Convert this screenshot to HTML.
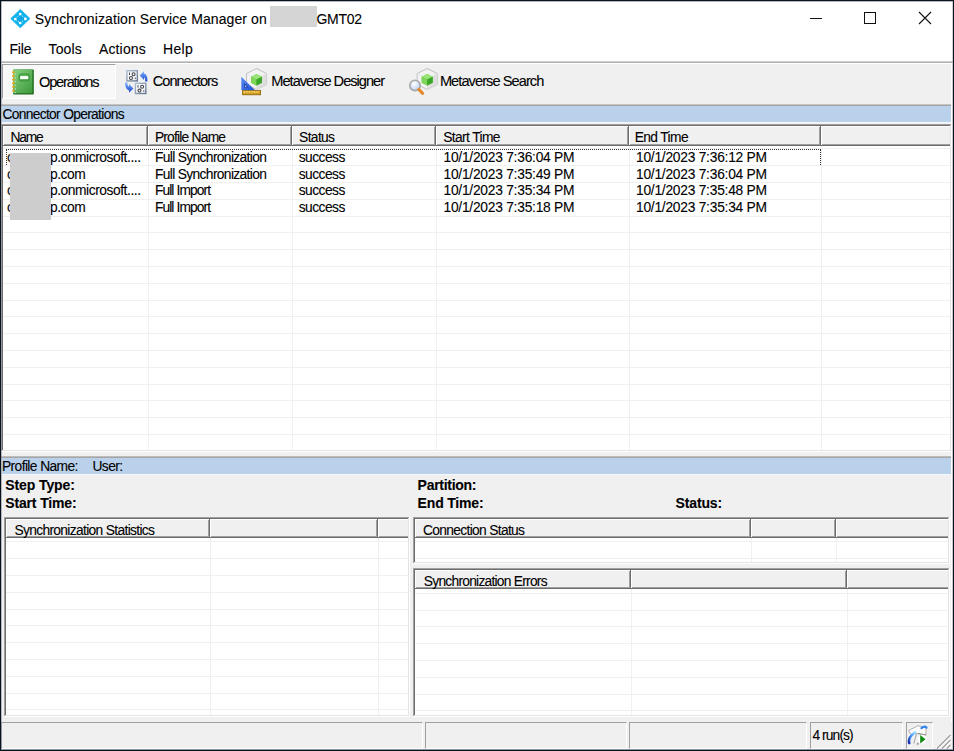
<!DOCTYPE html>
<html><head><meta charset="utf-8"><style>
html,body{margin:0;padding:0;width:954px;height:751px;overflow:hidden;background:#f0f0f0}
body{position:relative;font-family:"Liberation Sans",sans-serif}
.a{position:absolute;box-sizing:content-box}
.t{position:absolute;white-space:nowrap;font-family:"Liberation Sans",sans-serif;-webkit-text-stroke:0.1px currentColor}
svg.a{overflow:visible}
</style></head><body>
<div class="a" style="left:0px;top:0px;width:954px;height:751px;background:#f0f0f0;"></div>
<div class="a" style="left:1px;top:1px;width:952px;height:61px;background:#ffffff;"></div>
<div class="a" style="left:1px;top:61px;width:952px;height:1px;background:#cfcfcf;"></div>
<div class="a" style="left:1px;top:62px;width:952px;height:1px;background:#b2b2b2;"></div>
<div class="a" style="left:1px;top:63px;width:952px;height:1px;background:#ffffff;"></div>
<svg class="a" style="left:9px;top:8px" width="23" height="21" viewBox="0 0 23 21">
<path d="M11.3 1.4 L21 10.6 L11.3 19.8 L1.8 10.6 Z" fill="#10b2ec" stroke="#10b2ec" stroke-width="0.8" stroke-linejoin="round"/>
<path d="M11.2 6.1 L16.4 10.9 L11.2 15 L6.2 11.1 Z" fill="#0aa6e6" stroke="#c4ecfb" stroke-width="1" stroke-dasharray="1.5 1"/>
<circle cx="11.2" cy="6.1" r="1.35" fill="#fff"/><circle cx="6.2" cy="11.1" r="1.35" fill="#fff"/>
<circle cx="16.4" cy="10.9" r="1.35" fill="#fff"/><circle cx="11.2" cy="15" r="1.35" fill="#fff"/>
</svg>
<div class="t" id="t0" style="left:34.80px;top:12.15px;font-size:14px;line-height:14px;font-weight:normal;color:#000;letter-spacing:0.097px;">Synchronization Service Manager on</div>
<div class="a" style="left:270px;top:6px;width:47px;height:21px;background:#d5d5d5;"></div>
<div class="t" id="t1" style="left:316.40px;top:11.95px;font-size:14px;line-height:14px;font-weight:normal;color:#000;letter-spacing:-0.250px;">GMT02</div>
<div class="a" style="left:810px;top:18px;width:12px;height:1px;background:#111;"></div>
<div class="a" style="left:864px;top:12px;width:10px;height:10px;border:1.2px solid #111"></div>
<svg class="a" style="left:918px;top:11px" width="14" height="14" viewBox="0 0 14 14">
<path d="M1 1 L13 13 M13 1 L1 13" stroke="#111" stroke-width="1.1"/></svg>
<div class="t" id="t2" style="left:9.40px;top:42.25px;font-size:14px;line-height:14px;font-weight:normal;color:#000;letter-spacing:-0.132px;">File</div>
<div class="t" id="t3" style="left:48.60px;top:42.25px;font-size:14px;line-height:14px;font-weight:normal;color:#000;letter-spacing:0.100px;">Tools</div>
<div class="t" id="t4" style="left:98.90px;top:42.25px;font-size:14px;line-height:14px;font-weight:normal;color:#000;letter-spacing:0.166px;">Actions</div>
<div class="t" id="t5" style="left:162.90px;top:42.25px;font-size:14px;line-height:14px;font-weight:normal;color:#000;letter-spacing:0.401px;">Help</div>
<div class="a" style="left:2px;top:64px;width:112px;height:33px;border-top:1px solid #a0a0a0;border-left:1px solid #a0a0a0;border-right:1px solid #fff;border-bottom:1px solid #fff;background-color:#f6f6f6;background-image:linear-gradient(45deg,#fafafa 25%,transparent 25%,transparent 75%,#fafafa 75%),linear-gradient(45deg,#fafafa 25%,transparent 25%,transparent 75%,#fafafa 75%);background-size:2px 2px;background-position:0 0,1px 1px"></div>
<svg class="a" style="left:11px;top:68px" width="25" height="28" viewBox="0 0 25 28">
<defs><linearGradient id="gnb" x1="0" y1="0" x2="1" y2="1"><stop offset="0" stop-color="#86d27f"/><stop offset="1" stop-color="#3b983a"/></linearGradient></defs>
<rect x="2.2" y="1.6" width="20.6" height="25" rx="0.8" fill="#1c6a1c"/>
<rect x="2.2" y="1.6" width="19.2" height="23.6" rx="0.8" fill="url(#gnb)"/>
<rect x="8.2" y="6.2" width="10" height="6.6" rx="2.2" fill="none" stroke="#3c963c" stroke-width="1.3"/>
<rect x="9.2" y="8.2" width="8" height="2.8" fill="#ffffff"/>
<g fill="#e3a91c"><circle cx="2.4" cy="4.2" r="1.25"/><circle cx="2.4" cy="7.9" r="1.25"/><circle cx="2.4" cy="11.6" r="1.25"/><circle cx="2.4" cy="15.3" r="1.25"/><circle cx="2.4" cy="19" r="1.25"/><circle cx="2.4" cy="22.7" r="1.25"/></g>
<g fill="#d8f0d8"><rect x="3.6" y="5.6" width="1.2" height="1"/><rect x="3.6" y="9.3" width="1.2" height="1"/><rect x="3.6" y="13" width="1.2" height="1"/><rect x="3.6" y="16.7" width="1.2" height="1"/><rect x="3.6" y="20.4" width="1.2" height="1"/><rect x="3.6" y="24.1" width="1.2" height="1"/></g>
</svg>
<div class="t" id="t6" style="left:39.00px;top:75.44px;font-size:14.6px;line-height:14.6px;font-weight:normal;color:#000;letter-spacing:-1.201px;">Operations</div>
<svg class="a" style="left:122px;top:68px" width="28" height="28" viewBox="0 0 28 28">
<defs><linearGradient id="gbx" x1="0" y1="0" x2="1" y2="1"><stop offset="0" stop-color="#b9c6d8"/><stop offset="1" stop-color="#5d6f88"/></linearGradient>
<linearGradient id="gar" x1="0" y1="0" x2="0" y2="1"><stop offset="0" stop-color="#7fb0ff"/><stop offset="1" stop-color="#1846c8"/></linearGradient></defs>
<rect x="4.2" y="2" width="11.8" height="11.6" fill="url(#gbx)"/>
<rect x="5.6" y="3.4" width="9" height="8.8" fill="#f2f5fb"/>
<rect x="12.7" y="14.6" width="11.8" height="11.6" fill="url(#gbx)"/>
<rect x="14.1" y="16" width="9" height="8.8" fill="#f2f5fb"/>
<g fill="none" stroke="#4a4a4a" stroke-width="1.1"><circle cx="11.6" cy="6.2" r="1.5"/><circle cx="9" cy="10" r="1.5"/><circle cx="20.1" cy="18.8" r="1.5"/><circle cx="17.5" cy="22.6" r="1.5"/></g>
<g fill="#555"><rect x="7" y="4.5" width="1" height="2.5"/><rect x="12.8" y="9.5" width="1" height="1.6"/><rect x="15.5" y="17.1" width="1" height="2.5"/><rect x="21.3" y="22.1" width="1" height="1.6"/></g>
<path d="M17.8 7.6 L22 3.2 L22 5.6 Q25.8 6.4 25.4 13.6 L23.2 13.6 Q23.4 9.6 22 9.4 L22 12 Z" fill="url(#gar)"/>
<path d="M11.4 20.4 L7 24.8 L7 22.4 Q3 21.6 3.2 14.6 L5.4 14.6 Q5.2 18.4 7 18.6 L7 16 Z" fill="url(#gar)"/>
</svg>
<div class="t" id="t7" style="left:152.80px;top:74.44px;font-size:14.6px;line-height:14.6px;font-weight:normal;color:#000;letter-spacing:-1.021px;">Connectors</div>
<svg class="a" style="left:240px;top:67px" width="30" height="30" viewBox="0 0 30 30">
<defs><linearGradient id="gtr" x1="0" y1="0" x2="1" y2="1"><stop offset="0" stop-color="#5b8df5"/><stop offset="1" stop-color="#1d4fd2"/></linearGradient>
<linearGradient id="grl" x1="0" y1="0" x2="0" y2="1"><stop offset="0" stop-color="#f0c040"/><stop offset="1" stop-color="#c88e10"/></linearGradient></defs>
<path d="M16.5 1.5 L26.5 6.5 L26.5 17.5 L16.5 22.5 L6.5 17.5 L6.5 6.5 Z" fill="#f3f3f3" stroke="#c4c4c4" stroke-width="1.1"/>
<path d="M16.5 22.5 L16.5 12 L26.5 6.5 L26.5 17.5 Z" fill="#dedede"/>
<path d="M6.5 6.5 L16.5 12 L26.5 6.5 M16.5 12 L16.5 22.5" fill="none" stroke="#e6e6e6" stroke-width="0.8"/>
<path d="M16.5 7 L22.0 9.8 L22.0 15.8 L16.5 18.6 L11.0 15.8 L11.0 9.8 Z" fill="#5cc13a"/>
<path d="M11.0 9.8 L16.5 12.6 L22.0 9.8 L16.5 7 Z" fill="#9be47a"/>
<path d="M11.0 9.8 L16.5 12.6 L16.5 18.6 L11.0 15.8 Z" fill="#7fd55a"/>
<path d="M16.5 12.6 L16.5 18.6 L22.0 15.8 L22.0 9.8 Z" fill="#3aa528"/>
<path d="M1.3 9.8 L1.3 23 L14.8 23 Z" fill="url(#gtr)"/>
<path d="M4.2 16.2 L4.2 20.6 L8.6 20.6 Z" fill="#163a9e"/>
<circle cx="5.6" cy="19.2" r="0.8" fill="#c8d8ff"/>
<rect x="2.6" y="23.4" width="18" height="4.4" fill="url(#grl)" stroke="#8a6210" stroke-width="0.8"/>
<path d="M4 25 h1 M6.5 25 h1 M9 25 h1 M11.5 25 h1 M14 25 h1 M16.5 25 h1" stroke="#fff3c0" stroke-width="1"/>
</svg>
<div class="t" id="t8" style="left:271.30px;top:74.44px;font-size:14.6px;line-height:14.6px;font-weight:normal;color:#000;letter-spacing:-0.990px;">Metaverse Designer</div>
<svg class="a" style="left:406px;top:67px" width="32" height="30" viewBox="0 0 32 30">
<defs><radialGradient id="glens" cx="0.4" cy="0.35" r="0.7"><stop offset="0" stop-color="#ffffff"/><stop offset="1" stop-color="#b8cdf0"/></radialGradient></defs>
<path d="M21.2 1.5 L31.2 6.5 L31.2 17.5 L21.2 22.5 L11.2 17.5 L11.2 6.5 Z" fill="#f3f3f3" stroke="#c4c4c4" stroke-width="1.1"/>
<path d="M21.2 22.5 L21.2 12 L31.2 6.5 L31.2 17.5 Z" fill="#dedede"/>
<path d="M11.2 6.5 L21.2 12 L31.2 6.5 M21.2 12 L21.2 22.5" fill="none" stroke="#e6e6e6" stroke-width="0.8"/>
<path d="M21.2 7 L26.7 9.8 L26.7 15.8 L21.2 18.6 L15.7 15.8 L15.7 9.8 Z" fill="#5cc13a"/>
<path d="M15.7 9.8 L21.2 12.6 L26.7 9.8 L21.2 7 Z" fill="#9be47a"/>
<path d="M15.7 9.8 L21.2 12.6 L21.2 18.6 L15.7 15.8 Z" fill="#7fd55a"/>
<path d="M21.2 12.6 L21.2 18.6 L26.7 15.8 L26.7 9.8 Z" fill="#3aa528"/>
<circle cx="9" cy="18.4" r="5.2" fill="url(#glens)" stroke="#a6a6a6" stroke-width="1.6"/>
<path d="M12.8 22.4 L16.6 26.4" stroke="#e5892a" stroke-width="3" stroke-linecap="round"/>
</svg>
<div class="t" id="t9" style="left:439.90px;top:74.44px;font-size:14.6px;line-height:14.6px;font-weight:normal;color:#000;letter-spacing:-0.933px;">Metaverse Search</div>
<div class="a" style="left:1px;top:104px;width:951px;height:1px;background:#c4c4c4;"></div>
<div class="a" style="left:1px;top:105px;width:951px;height:1px;background:#a4a4a4;"></div>
<div class="a" style="left:2px;top:106px;width:949px;height:16px;background:#b9d1ea;"></div>
<div class="a" style="left:2px;top:122px;width:949px;height:1px;background:#f4f8fc;"></div>
<div class="t" id="t10" style="left:2.40px;top:107.52px;font-size:13.8px;line-height:13.8px;font-weight:normal;color:#000;letter-spacing:-0.674px;">Connector Operations</div>
<div class="a" style="left:1px;top:124px;width:951px;height:328px;background:#ffffff;"></div>
<div class="a" style="left:1px;top:124px;width:951px;height:1px;background:#a0a0a0;"></div>
<div class="a" style="left:1px;top:124px;width:1px;height:328px;background:#a0a0a0;"></div>
<div class="a" style="left:2px;top:125px;width:949px;height:1px;background:#6d6d6d;"></div>
<div class="a" style="left:2px;top:125px;width:1px;height:326px;background:#6d6d6d;"></div>
<div class="a" style="left:1px;top:451px;width:951px;height:1px;background:#ffffff;"></div>
<div class="a" style="left:951px;top:124px;width:1px;height:328px;background:#ffffff;"></div>
<div class="a" style="left:2px;top:450px;width:949px;height:1px;background:#e3e3e3;"></div>
<div class="a" style="left:950px;top:125px;width:1px;height:326px;background:#e3e3e3;"></div>
<div class="a" style="left:3px;top:126px;width:947px;height:20px;background:#f0f0f0;"></div>
<div class="a" style="left:3px;top:126px;width:947px;height:1px;background:#ffffff;"></div>
<div class="a" style="left:3px;top:145px;width:947px;height:1px;background:#6d6d6d;"></div>
<div class="a" style="left:3px;top:144px;width:947px;height:1px;background:#a0a0a0;"></div>
<div class="a" style="left:3px;top:126px;width:1px;height:19px;background:#ffffff;"></div>
<div class="a" style="left:146px;top:127px;width:1px;height:18px;background:#a0a0a0;"></div>
<div class="a" style="left:147px;top:126px;width:1px;height:20px;background:#6d6d6d;"></div>
<div class="a" style="left:148px;top:126px;width:1px;height:19px;background:#ffffff;"></div>
<div class="a" style="left:290px;top:127px;width:1px;height:18px;background:#a0a0a0;"></div>
<div class="a" style="left:291px;top:126px;width:1px;height:20px;background:#6d6d6d;"></div>
<div class="a" style="left:292px;top:126px;width:1px;height:19px;background:#ffffff;"></div>
<div class="a" style="left:434px;top:127px;width:1px;height:18px;background:#a0a0a0;"></div>
<div class="a" style="left:435px;top:126px;width:1px;height:20px;background:#6d6d6d;"></div>
<div class="a" style="left:436px;top:126px;width:1px;height:19px;background:#ffffff;"></div>
<div class="a" style="left:627px;top:127px;width:1px;height:18px;background:#a0a0a0;"></div>
<div class="a" style="left:628px;top:126px;width:1px;height:20px;background:#6d6d6d;"></div>
<div class="a" style="left:629px;top:126px;width:1px;height:19px;background:#ffffff;"></div>
<div class="a" style="left:819px;top:127px;width:1px;height:18px;background:#a0a0a0;"></div>
<div class="a" style="left:820px;top:126px;width:1px;height:20px;background:#6d6d6d;"></div>
<div class="a" style="left:821px;top:126px;width:1px;height:19px;background:#ffffff;"></div>
<div class="a" style="left:3px;top:148px;width:947px;height:1px;background:#f0f0f0;"></div>
<div class="a" style="left:3px;top:165px;width:947px;height:1px;background:#f0f0f0;"></div>
<div class="a" style="left:3px;top:182px;width:947px;height:1px;background:#f0f0f0;"></div>
<div class="a" style="left:3px;top:199px;width:947px;height:1px;background:#f0f0f0;"></div>
<div class="a" style="left:3px;top:216px;width:947px;height:1px;background:#f0f0f0;"></div>
<div class="a" style="left:3px;top:232px;width:947px;height:1px;background:#f0f0f0;"></div>
<div class="a" style="left:3px;top:249px;width:947px;height:1px;background:#f0f0f0;"></div>
<div class="a" style="left:3px;top:266px;width:947px;height:1px;background:#f0f0f0;"></div>
<div class="a" style="left:3px;top:283px;width:947px;height:1px;background:#f0f0f0;"></div>
<div class="a" style="left:3px;top:300px;width:947px;height:1px;background:#f0f0f0;"></div>
<div class="a" style="left:3px;top:316px;width:947px;height:1px;background:#f0f0f0;"></div>
<div class="a" style="left:3px;top:333px;width:947px;height:1px;background:#f0f0f0;"></div>
<div class="a" style="left:3px;top:350px;width:947px;height:1px;background:#f0f0f0;"></div>
<div class="a" style="left:3px;top:367px;width:947px;height:1px;background:#f0f0f0;"></div>
<div class="a" style="left:3px;top:384px;width:947px;height:1px;background:#f0f0f0;"></div>
<div class="a" style="left:3px;top:400px;width:947px;height:1px;background:#f0f0f0;"></div>
<div class="a" style="left:3px;top:417px;width:947px;height:1px;background:#f0f0f0;"></div>
<div class="a" style="left:3px;top:434px;width:947px;height:1px;background:#f0f0f0;"></div>
<div class="a" style="left:148px;top:146px;width:1px;height:304px;background:#f0f0f0;"></div>
<div class="a" style="left:292px;top:146px;width:1px;height:304px;background:#f0f0f0;"></div>
<div class="a" style="left:436px;top:146px;width:1px;height:304px;background:#f0f0f0;"></div>
<div class="a" style="left:629px;top:146px;width:1px;height:304px;background:#f0f0f0;"></div>
<div class="a" style="left:821px;top:146px;width:1px;height:304px;background:#f0f0f0;"></div>
<div class="t" id="t11" style="left:10.50px;top:130.52px;font-size:13.8px;line-height:13.8px;font-weight:normal;color:#000;letter-spacing:-1.200px;">Name</div>
<div class="t" id="t12" style="left:154.90px;top:130.52px;font-size:13.8px;line-height:13.8px;font-weight:normal;color:#000;letter-spacing:-0.784px;">Profile Name</div>
<div class="t" id="t13" style="left:299.10px;top:130.52px;font-size:13.8px;line-height:13.8px;font-weight:normal;color:#000;letter-spacing:-0.640px;">Status</div>
<div class="t" id="t14" style="left:443.20px;top:130.52px;font-size:13.8px;line-height:13.8px;font-weight:normal;color:#000;letter-spacing:-0.622px;">Start Time</div>
<div class="t" id="t15" style="left:634.70px;top:130.52px;font-size:13.8px;line-height:13.8px;font-weight:normal;color:#000;letter-spacing:-0.630px;">End Time</div>
<div class="t" id="t16" style="left:49.90px;top:150.82px;font-size:13.8px;line-height:13.8px;font-weight:normal;color:#000;letter-spacing:-0.438px;">p.onmicrosoft....</div>
<div class="t" id="t17" style="left:154.90px;top:150.82px;font-size:13.8px;line-height:13.8px;font-weight:normal;color:#000;letter-spacing:-0.642px;">Full Synchronization</div>
<div class="t" id="t18" style="left:298.70px;top:150.82px;font-size:13.8px;line-height:13.8px;font-weight:normal;color:#000;letter-spacing:-0.534px;">success</div>
<div class="t" id="t19" style="left:443.50px;top:150.82px;font-size:13.8px;line-height:13.8px;font-weight:normal;color:#000;letter-spacing:-0.251px;">10/1/2023 7:36:04 PM</div>
<div class="t" id="t20" style="left:636.00px;top:150.82px;font-size:13.8px;line-height:13.8px;font-weight:normal;color:#000;letter-spacing:-0.251px;">10/1/2023 7:36:12 PM</div>
<div class="t" id="t21" style="left:7.00px;top:150.82px;font-size:13.8px;line-height:13.8px;font-weight:normal;color:#111;">o</div>
<div class="t" id="t22" style="left:49.90px;top:167.62px;font-size:13.8px;line-height:13.8px;font-weight:normal;color:#000;letter-spacing:-0.400px;">p.com</div>
<div class="t" id="t23" style="left:154.90px;top:167.62px;font-size:13.8px;line-height:13.8px;font-weight:normal;color:#000;letter-spacing:-0.642px;">Full Synchronization</div>
<div class="t" id="t24" style="left:298.70px;top:167.62px;font-size:13.8px;line-height:13.8px;font-weight:normal;color:#000;letter-spacing:-0.534px;">success</div>
<div class="t" id="t25" style="left:443.50px;top:167.62px;font-size:13.8px;line-height:13.8px;font-weight:normal;color:#000;letter-spacing:-0.251px;">10/1/2023 7:35:49 PM</div>
<div class="t" id="t26" style="left:636.00px;top:167.62px;font-size:13.8px;line-height:13.8px;font-weight:normal;color:#000;letter-spacing:-0.251px;">10/1/2023 7:36:04 PM</div>
<div class="t" id="t27" style="left:7.00px;top:167.62px;font-size:13.8px;line-height:13.8px;font-weight:normal;color:#111;">o</div>
<div class="t" id="t28" style="left:49.90px;top:184.42px;font-size:13.8px;line-height:13.8px;font-weight:normal;color:#000;letter-spacing:-0.438px;">p.onmicrosoft....</div>
<div class="t" id="t29" style="left:154.90px;top:184.42px;font-size:13.8px;line-height:13.8px;font-weight:normal;color:#000;letter-spacing:-0.900px;">Full Import</div>
<div class="t" id="t30" style="left:298.70px;top:184.42px;font-size:13.8px;line-height:13.8px;font-weight:normal;color:#000;letter-spacing:-0.534px;">success</div>
<div class="t" id="t31" style="left:443.50px;top:184.42px;font-size:13.8px;line-height:13.8px;font-weight:normal;color:#000;letter-spacing:-0.251px;">10/1/2023 7:35:34 PM</div>
<div class="t" id="t32" style="left:636.00px;top:184.42px;font-size:13.8px;line-height:13.8px;font-weight:normal;color:#000;letter-spacing:-0.251px;">10/1/2023 7:35:48 PM</div>
<div class="t" id="t33" style="left:7.00px;top:184.42px;font-size:13.8px;line-height:13.8px;font-weight:normal;color:#111;">o</div>
<div class="t" id="t34" style="left:49.90px;top:201.22px;font-size:13.8px;line-height:13.8px;font-weight:normal;color:#000;letter-spacing:-0.400px;">p.com</div>
<div class="t" id="t35" style="left:154.90px;top:201.22px;font-size:13.8px;line-height:13.8px;font-weight:normal;color:#000;letter-spacing:-0.900px;">Full Import</div>
<div class="t" id="t36" style="left:298.70px;top:201.22px;font-size:13.8px;line-height:13.8px;font-weight:normal;color:#000;letter-spacing:-0.534px;">success</div>
<div class="t" id="t37" style="left:443.50px;top:201.22px;font-size:13.8px;line-height:13.8px;font-weight:normal;color:#000;letter-spacing:-0.251px;">10/1/2023 7:35:18 PM</div>
<div class="t" id="t38" style="left:636.00px;top:201.22px;font-size:13.8px;line-height:13.8px;font-weight:normal;color:#000;letter-spacing:-0.251px;">10/1/2023 7:35:34 PM</div>
<div class="t" id="t39" style="left:7.00px;top:201.22px;font-size:13.8px;line-height:13.8px;font-weight:normal;color:#111;">o</div>
<div class="a" style="left:9.5px;top:152.5px;width:41px;height:67px;background:#cdcdcd;"></div>
<div class="a" style="left:6px;top:149px;width:813px;height:15px;border:1px dotted #333;border-bottom:none"></div>
<div class="a" style="left:1px;top:456px;width:951px;height:1px;background:#bcbcbc;"></div>
<div class="a" style="left:1px;top:457px;width:951px;height:1px;background:#a6a6a6;"></div>
<div class="a" style="left:2px;top:458px;width:949px;height:16px;background:#b9d1ea;"></div>
<div class="a" style="left:2px;top:474px;width:949px;height:1px;background:#f4f8fc;"></div>
<div class="t" id="t40" style="left:2.00px;top:460.02px;font-size:13.8px;line-height:13.8px;font-weight:normal;color:#000;letter-spacing:-0.601px;">Profile Name:</div>
<div class="t" id="t41" style="left:92.50px;top:460.02px;font-size:13.8px;line-height:13.8px;font-weight:normal;color:#000;letter-spacing:-0.600px;">User:</div>
<div class="t" id="t42" style="left:5.20px;top:478.15px;font-size:14px;line-height:14px;font-weight:bold;color:#000;letter-spacing:-0.090px;">Step Type:</div>
<div class="t" id="t43" style="left:5.20px;top:495.95px;font-size:14px;line-height:14px;font-weight:bold;color:#000;letter-spacing:-0.140px;">Start Time:</div>
<div class="t" id="t44" style="left:417.60px;top:478.15px;font-size:14px;line-height:14px;font-weight:bold;color:#000;letter-spacing:-0.288px;">Partition:</div>
<div class="t" id="t45" style="left:417.60px;top:495.95px;font-size:14px;line-height:14px;font-weight:bold;color:#000;letter-spacing:-0.172px;">End Time:</div>
<div class="t" id="t46" style="left:675.60px;top:495.95px;font-size:14px;line-height:14px;font-weight:bold;color:#000;letter-spacing:-0.166px;">Status:</div>
<div class="a" style="left:4px;top:517px;width:406px;height:200px;background:#ffffff;"></div>
<div class="a" style="left:4px;top:517px;width:406px;height:1px;background:#a0a0a0;"></div>
<div class="a" style="left:4px;top:517px;width:1px;height:200px;background:#a0a0a0;"></div>
<div class="a" style="left:5px;top:518px;width:404px;height:1px;background:#6d6d6d;"></div>
<div class="a" style="left:5px;top:518px;width:1px;height:198px;background:#6d6d6d;"></div>
<div class="a" style="left:4px;top:716px;width:406px;height:1px;background:#ffffff;"></div>
<div class="a" style="left:409px;top:517px;width:1px;height:200px;background:#ffffff;"></div>
<div class="a" style="left:5px;top:715px;width:404px;height:1px;background:#e3e3e3;"></div>
<div class="a" style="left:408px;top:518px;width:1px;height:198px;background:#e3e3e3;"></div>
<div class="a" style="left:6px;top:519px;width:402px;height:19px;background:#f0f0f0;"></div>
<div class="a" style="left:6px;top:519px;width:402px;height:1px;background:#ffffff;"></div>
<div class="a" style="left:6px;top:537px;width:402px;height:1px;background:#6d6d6d;"></div>
<div class="a" style="left:6px;top:536px;width:402px;height:1px;background:#a0a0a0;"></div>
<div class="a" style="left:6px;top:519px;width:1px;height:18px;background:#ffffff;"></div>
<div class="a" style="left:208px;top:520px;width:1px;height:17px;background:#a0a0a0;"></div>
<div class="a" style="left:209px;top:519px;width:1px;height:19px;background:#6d6d6d;"></div>
<div class="a" style="left:210px;top:519px;width:1px;height:18px;background:#ffffff;"></div>
<div class="a" style="left:376px;top:520px;width:1px;height:17px;background:#a0a0a0;"></div>
<div class="a" style="left:377px;top:519px;width:1px;height:19px;background:#6d6d6d;"></div>
<div class="a" style="left:378px;top:519px;width:1px;height:18px;background:#ffffff;"></div>
<div class="a" style="left:6px;top:541px;width:402px;height:1px;background:#f0f0f0;"></div>
<div class="a" style="left:6px;top:558px;width:402px;height:1px;background:#f0f0f0;"></div>
<div class="a" style="left:6px;top:575px;width:402px;height:1px;background:#f0f0f0;"></div>
<div class="a" style="left:6px;top:592px;width:402px;height:1px;background:#f0f0f0;"></div>
<div class="a" style="left:6px;top:609px;width:402px;height:1px;background:#f0f0f0;"></div>
<div class="a" style="left:6px;top:625px;width:402px;height:1px;background:#f0f0f0;"></div>
<div class="a" style="left:6px;top:642px;width:402px;height:1px;background:#f0f0f0;"></div>
<div class="a" style="left:6px;top:659px;width:402px;height:1px;background:#f0f0f0;"></div>
<div class="a" style="left:6px;top:676px;width:402px;height:1px;background:#f0f0f0;"></div>
<div class="a" style="left:6px;top:693px;width:402px;height:1px;background:#f0f0f0;"></div>
<div class="a" style="left:6px;top:709px;width:402px;height:1px;background:#f0f0f0;"></div>
<div class="a" style="left:210px;top:538px;width:1px;height:177px;background:#f0f0f0;"></div>
<div class="a" style="left:378px;top:538px;width:1px;height:177px;background:#f0f0f0;"></div>
<div class="t" id="t47" style="left:14.40px;top:523.52px;font-size:13.8px;line-height:13.8px;font-weight:normal;color:#000;letter-spacing:-0.664px;">Synchronization Statistics</div>
<div class="a" style="left:413px;top:517px;width:537px;height:47px;background:#ffffff;"></div>
<div class="a" style="left:413px;top:517px;width:537px;height:1px;background:#a0a0a0;"></div>
<div class="a" style="left:413px;top:517px;width:1px;height:47px;background:#a0a0a0;"></div>
<div class="a" style="left:414px;top:518px;width:535px;height:1px;background:#6d6d6d;"></div>
<div class="a" style="left:414px;top:518px;width:1px;height:45px;background:#6d6d6d;"></div>
<div class="a" style="left:413px;top:563px;width:537px;height:1px;background:#ffffff;"></div>
<div class="a" style="left:949px;top:517px;width:1px;height:47px;background:#ffffff;"></div>
<div class="a" style="left:414px;top:562px;width:535px;height:1px;background:#e3e3e3;"></div>
<div class="a" style="left:948px;top:518px;width:1px;height:45px;background:#e3e3e3;"></div>
<div class="a" style="left:415px;top:519px;width:533px;height:19px;background:#f0f0f0;"></div>
<div class="a" style="left:415px;top:519px;width:533px;height:1px;background:#ffffff;"></div>
<div class="a" style="left:415px;top:537px;width:533px;height:1px;background:#6d6d6d;"></div>
<div class="a" style="left:415px;top:536px;width:533px;height:1px;background:#a0a0a0;"></div>
<div class="a" style="left:415px;top:519px;width:1px;height:18px;background:#ffffff;"></div>
<div class="a" style="left:749px;top:520px;width:1px;height:17px;background:#a0a0a0;"></div>
<div class="a" style="left:750px;top:519px;width:1px;height:19px;background:#6d6d6d;"></div>
<div class="a" style="left:751px;top:519px;width:1px;height:18px;background:#ffffff;"></div>
<div class="a" style="left:834px;top:520px;width:1px;height:17px;background:#a0a0a0;"></div>
<div class="a" style="left:835px;top:519px;width:1px;height:19px;background:#6d6d6d;"></div>
<div class="a" style="left:836px;top:519px;width:1px;height:18px;background:#ffffff;"></div>
<div class="a" style="left:415px;top:541px;width:533px;height:1px;background:#f0f0f0;"></div>
<div class="a" style="left:415px;top:558px;width:533px;height:1px;background:#f0f0f0;"></div>
<div class="a" style="left:751px;top:538px;width:1px;height:24px;background:#f0f0f0;"></div>
<div class="a" style="left:836px;top:538px;width:1px;height:24px;background:#f0f0f0;"></div>
<div class="t" id="t48" style="left:423.00px;top:523.72px;font-size:13.8px;line-height:13.8px;font-weight:normal;color:#000;letter-spacing:-0.673px;">Connection Status</div>
<div class="a" style="left:413px;top:568px;width:537px;height:149px;background:#ffffff;"></div>
<div class="a" style="left:413px;top:568px;width:537px;height:1px;background:#a0a0a0;"></div>
<div class="a" style="left:413px;top:568px;width:1px;height:149px;background:#a0a0a0;"></div>
<div class="a" style="left:414px;top:569px;width:535px;height:1px;background:#6d6d6d;"></div>
<div class="a" style="left:414px;top:569px;width:1px;height:147px;background:#6d6d6d;"></div>
<div class="a" style="left:413px;top:716px;width:537px;height:1px;background:#ffffff;"></div>
<div class="a" style="left:949px;top:568px;width:1px;height:149px;background:#ffffff;"></div>
<div class="a" style="left:414px;top:715px;width:535px;height:1px;background:#e3e3e3;"></div>
<div class="a" style="left:948px;top:569px;width:1px;height:147px;background:#e3e3e3;"></div>
<div class="a" style="left:415px;top:570px;width:533px;height:19px;background:#f0f0f0;"></div>
<div class="a" style="left:415px;top:570px;width:533px;height:1px;background:#ffffff;"></div>
<div class="a" style="left:415px;top:588px;width:533px;height:1px;background:#6d6d6d;"></div>
<div class="a" style="left:415px;top:587px;width:533px;height:1px;background:#a0a0a0;"></div>
<div class="a" style="left:415px;top:570px;width:1px;height:18px;background:#ffffff;"></div>
<div class="a" style="left:629px;top:571px;width:1px;height:17px;background:#a0a0a0;"></div>
<div class="a" style="left:630px;top:570px;width:1px;height:19px;background:#6d6d6d;"></div>
<div class="a" style="left:631px;top:570px;width:1px;height:18px;background:#ffffff;"></div>
<div class="a" style="left:845px;top:571px;width:1px;height:17px;background:#a0a0a0;"></div>
<div class="a" style="left:846px;top:570px;width:1px;height:19px;background:#6d6d6d;"></div>
<div class="a" style="left:847px;top:570px;width:1px;height:18px;background:#ffffff;"></div>
<div class="a" style="left:415px;top:593px;width:533px;height:1px;background:#f0f0f0;"></div>
<div class="a" style="left:415px;top:610px;width:533px;height:1px;background:#f0f0f0;"></div>
<div class="a" style="left:415px;top:626px;width:533px;height:1px;background:#f0f0f0;"></div>
<div class="a" style="left:415px;top:643px;width:533px;height:1px;background:#f0f0f0;"></div>
<div class="a" style="left:415px;top:660px;width:533px;height:1px;background:#f0f0f0;"></div>
<div class="a" style="left:415px;top:677px;width:533px;height:1px;background:#f0f0f0;"></div>
<div class="a" style="left:415px;top:694px;width:533px;height:1px;background:#f0f0f0;"></div>
<div class="a" style="left:415px;top:710px;width:533px;height:1px;background:#f0f0f0;"></div>
<div class="a" style="left:631px;top:589px;width:1px;height:126px;background:#f0f0f0;"></div>
<div class="a" style="left:847px;top:589px;width:1px;height:126px;background:#f0f0f0;"></div>
<div class="t" id="t49" style="left:423.80px;top:575.32px;font-size:13.8px;line-height:13.8px;font-weight:normal;color:#000;letter-spacing:-0.750px;">Synchronization Errors</div>
<div class="a" style="left:1px;top:722px;width:420px;height:25px;border-top:1px solid #a0a0a0;border-left:1px solid #a0a0a0;border-right:1px solid #fff;border-bottom:1px solid #fff"></div>
<div class="a" style="left:425px;top:722px;width:200px;height:25px;border-top:1px solid #a0a0a0;border-left:1px solid #a0a0a0;border-right:1px solid #fff;border-bottom:1px solid #fff"></div>
<div class="a" style="left:629px;top:722px;width:176px;height:25px;border-top:1px solid #a0a0a0;border-left:1px solid #a0a0a0;border-right:1px solid #fff;border-bottom:1px solid #fff"></div>
<div class="a" style="left:810px;top:722px;width:91px;height:25px;border-top:1px solid #a0a0a0;border-left:1px solid #a0a0a0;border-right:1px solid #fff;border-bottom:1px solid #fff"></div>
<div class="a" style="left:906px;top:722px;width:25px;height:25px;border-top:1px solid #a0a0a0;border-left:1px solid #a0a0a0;border-right:1px solid #fff;border-bottom:1px solid #fff"></div>
<div class="t" id="t50" style="left:812.40px;top:729.32px;font-size:13.8px;line-height:13.8px;font-weight:normal;color:#000;letter-spacing:-0.888px;">4 run(s)</div>
<svg class="a" style="left:907px;top:725px" width="21" height="21" viewBox="0 0 21 21">
<defs><linearGradient id="gsw" x1="0" y1="1" x2="1" y2="0"><stop offset="0" stop-color="#1a2fb0"/><stop offset="0.5" stop-color="#3d8ef5"/><stop offset="1" stop-color="#9fdcff"/></linearGradient></defs>
<path d="M1.5 5.5 L10.8 0.8 L19 2.2 L19 10 L11 8.5 L4 9.5 Z" fill="#fafafa" stroke="#a8a8a8" stroke-width="0.9" stroke-linejoin="round"/>
<path d="M11 8.5 L19 10" stroke="#8a8a8a" stroke-width="1"/>
<path d="M2.2 18 Q0.8 12.5 8 7.6" fill="none" stroke="url(#gsw)" stroke-width="2.8" stroke-linecap="round"/>
<path d="M3.6 16.5 Q3 12.5 8 9.2" fill="none" stroke="#d8f2ff" stroke-width="0.8"/>
<path d="M9.5 8.8 L6.8 18.5" stroke="#9a9a9a" stroke-width="0.9"/>
<path d="M14.5 3.2 Q17.5 0.6 19.5 2.6" fill="none" stroke="#2f86f0" stroke-width="2.2" stroke-linecap="round"/>
<circle cx="15.2" cy="14.3" r="4.6" fill="#ffffff"/>
<path d="M13.2 10 L18.6 14.3 L13.2 18.6 Z" fill="#138a13"/>
<path d="M9.2 19.5 L11.2 17.2 L12 19.5 Z" fill="#8a8a8a"/>
</svg>
<svg class="a" style="left:935px;top:733px" width="17" height="16" viewBox="0 0 17 16">
<path d="M15.5 2 L2 15.5 M15.5 7 L7 15.5 M15.5 12 L12 15.5" stroke="#a0a0a0" stroke-width="1.2"/>
<path d="M16.5 3 L3 16.5 M16.5 8 L8 16.5 M16.5 13 L13 16.5" stroke="#fff" stroke-width="1"/>
</svg>
<div class="a" style="left:951px;top:63px;width:1px;height:659px;background:#ffffff;"></div>
<div class="a" style="left:1px;top:1px;width:952px;height:1px;background:#aeb2b7;opacity:0.9"></div>
<div class="a" style="left:1px;top:749px;width:952px;height:1px;background:#8c96a1;"></div>
<div class="a" style="left:1px;top:1px;width:1px;height:749px;background:#8c9096;opacity:0.6"></div>
<div class="a" style="left:952px;top:1px;width:1px;height:749px;background:#9aa3ad;opacity:0.5"></div>
<div class="a" style="left:0px;top:0px;width:954px;height:1px;background:#07131f;"></div>
<div class="a" style="left:0px;top:0px;width:1px;height:751px;background:#07131f;"></div>
<div class="a" style="left:953px;top:0px;width:1px;height:751px;background:#07131f;"></div>
<div class="a" style="left:0px;top:750px;width:954px;height:1px;background:#07131f;"></div>
</body></html>
